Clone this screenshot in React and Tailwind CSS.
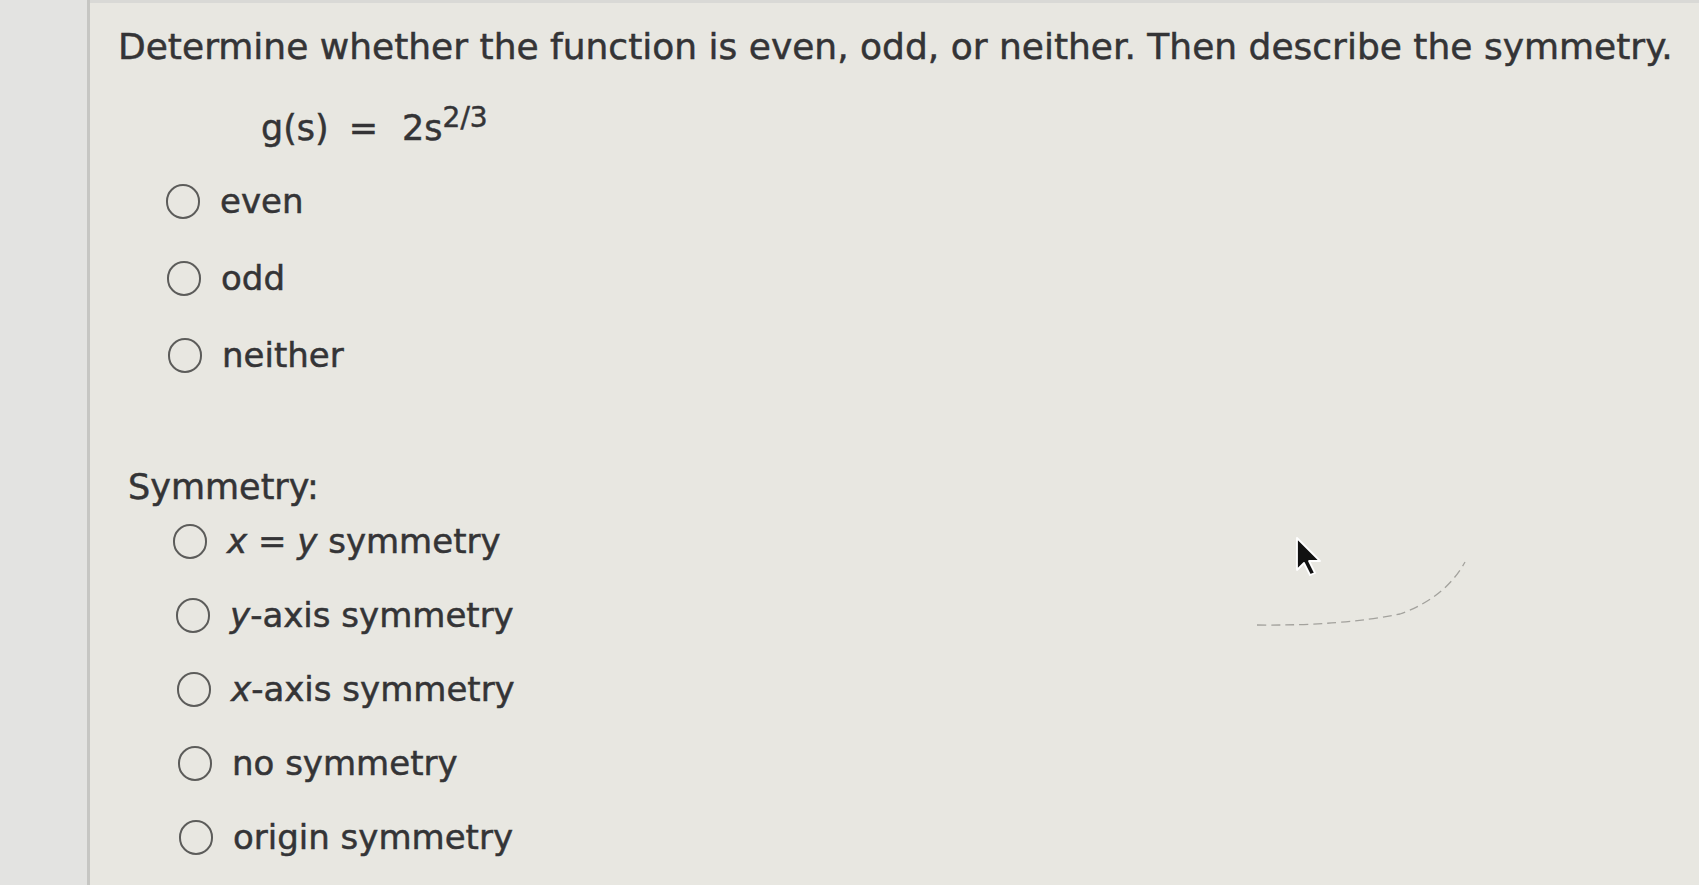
import React from 'react';

const FONT = { fontFamily: '"DejaVu Sans", Verdana, sans-serif' };

function Radio({ children, shift = '' }) {
  return (
    <div className={`flex items-center gap-[20px] ${shift}`}>
      <span className="w-[34px] h-[35px] rounded-full border-[2.5px] border-[#5c5c5a] shrink-0" />
      <span>{children}</span>
    </div>
  );
}

export default function App() {
  return (
    <div
      className="relative w-[1699px] h-[885px] flex overflow-hidden bg-[#e8e7e1] text-[#343436] [-webkit-text-stroke:0.5px_#343436]"
      style={FONT}
    >
      {/* left gutter */}
      <div className="w-[90px] shrink-0 bg-[#e3e3e1] border-r-[3px] border-[#c6c6c3]" />

      <div className="flex-1 pl-[28px] pt-[22px] border-t-[3px] border-[#d9d9d6]">
        <h1 className="text-[36px] leading-[44px]">
          Determine whether the function is even, odd, or neither. Then describe the symmetry.
        </h1>

        <div className="ml-[143px] mt-[39px] text-[35px] leading-[40px] flex items-baseline">
          <span>g(s)</span>
          <span className="ml-[20px]">=</span>
          <span className="ml-[24px]">2s</span>
          <sup className="text-[28px] relative -top-[13px]">2/3</sup>
        </div>

        <div className="ml-[48px] mt-[33px] flex flex-col gap-[37px] text-[34px] leading-[40px]">
          <Radio>even</Radio>
          <Radio shift="ml-[1px]">odd</Radio>
          <Radio shift="ml-[2px]">neither</Radio>
        </div>

        <div className="ml-[10px] mt-[92px] text-[35px] leading-[40px]">Symmetry:</div>

        <div className="ml-[55px] mt-[14px] flex flex-col gap-[34px] text-[34px] leading-[40px]">
          <Radio><i>x</i> = <i>y</i> symmetry</Radio>
          <Radio shift="ml-[3px]"><i>y</i>-axis symmetry</Radio>
          <Radio shift="ml-[4px]"><i>x</i>-axis symmetry</Radio>
          <Radio shift="ml-[5px]">no symmetry</Radio>
          <Radio shift="ml-[6px]">origin symmetry</Radio>
        </div>
      </div>

      {/* mouse pointer + faint pen mark */}
      <svg className="absolute left-[1240px] top-[530px]" width="240" height="110" viewBox="0 0 240 110">
        <path d="M57 8 L57 40 L64 33 L70 45 L75 43 L69 31 L80 31 Z" fill="#111" stroke="#fff" strokeWidth="1.8" strokeLinejoin="round" />
        <path d="M17 95 Q100 96 160 84 Q205 68 225 32" fill="none" stroke="#a3a29d" strokeWidth="1.3" strokeDasharray="9 5" />
      </svg>
    </div>
  );
}
